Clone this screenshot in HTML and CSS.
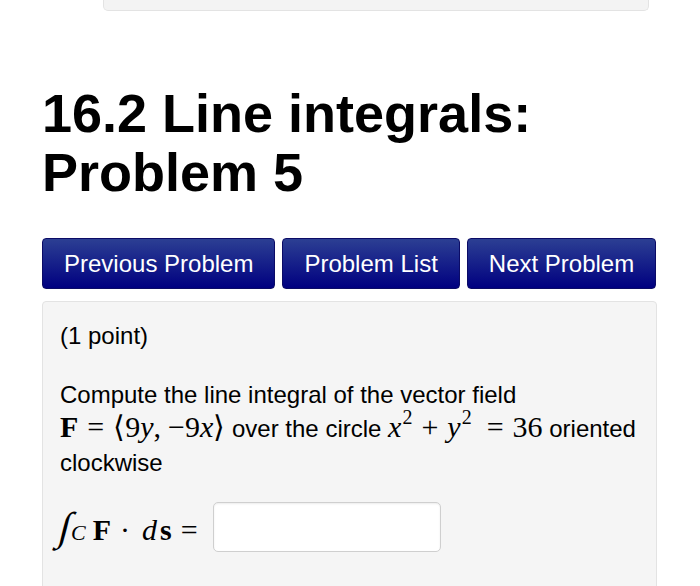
FILE: index.html
```html
<!DOCTYPE html>
<html lang="en">
<head>
    <meta charset="UTF-8">
    <meta name="viewport" content="width=device-width, initial-scale=1.0">
    <title>16.2 Line integrals: Problem 5</title>
    <link rel="stylesheet" href="styles.css">
</head>
<body>

<div id="page">
    <div class="top-well"></div>

    <h1 class="problem-title">16.2 Line integrals:<br>Problem 5</h1>

    <div class="nav-buttons">
        <button class="nav-btn">Previous Problem</button>
        <button class="nav-btn">Problem List</button>
        <button class="nav-btn">Next Problem</button>
    </div>

    <div class="problem-well">
        <div class="points">(1 point)</div>

        <p class="statement">
            Compute the line integral of the vector field<br>
            <span class="math"><b>F</b><span class="rel">=</span>⟨9<i>y</i>,<span class="thin"></span>−9<i>x</i>⟩</span>
            over the circle
            <span class="math"><i>x</i><sup>2</sup><span class="bin">+</span><i>y</i><sup>2</sup><span class="rel wide">=</span>36</span>
            oriented<br>
            clockwise
        </p>

        <div class="answer-row">
            <span class="math integral-expr"><span class="int">∫</span><sub><i>C</i></sub><b>F</b><span class="dot">·</span><i>d</i><b class="vec-s">s</b><span class="rel">=</span></span>
            <input class="answer-input" type="text">
        </div>
    </div>
</div>

</body>
</html>
```

FILE: styles.css
```css
body {
    margin: 0;
    background-color: #fff;
    font-family: 'Liberation Sans', Arial, sans-serif;
    color: #000;
}

#page {
    padding: 0 43px 0 42px;
}

.top-well {
    margin-left: 61px;
    width: 544px;
    height: 10px;
    background-color: #f3f3f3;
    border: 1px solid #e3e3e3;
    border-top: none;
    border-radius: 0 0 5px 5px;
}

.problem-title {
    margin: 73px 0 0 0;
    font-size: 54px;
    line-height: 59px;
    font-weight: bold;
}

.nav-buttons {
    display: flex;
    gap: 7px;
    margin-top: 36px;
}

.nav-btn {
    height: 51px;
    padding: 0 21px;
    white-space: nowrap;
    font-family: 'Liberation Sans', Arial, sans-serif;
    font-size: 24px;
    color: #fff;
    background: linear-gradient(to bottom, #2c3f93, #000080);
    border: 1px solid #0b0b66;
    border-radius: 4px;
    cursor: pointer;
}

.problem-well {
    margin-top: 12px;
    padding: 17px 17px 40px 17px;
    min-height: 300px;
    background-color: #f5f5f5;
    border: 1px solid #e3e3e3;
    border-radius: 4px;
    font-size: 24px;
    line-height: 34px;
}

.points {
    margin-bottom: 25px;
}

.statement {
    margin: 0;
}

.math {
    font-family: 'Liberation Serif', 'Times New Roman', serif;
    font-size: 30px;
    line-height: 1;
    white-space: nowrap;
}

.math i {
    font-style: italic;
}

.math sup {
    font-size: 20px;
    line-height: 0;
    vertical-align: 13px;
    margin-left: 1px;
}

.rel {
    margin: 0 9px;
}

.rel.wide {
    margin-left: 15px;
}

.bin {
    margin: 0 9px;
}

.thin {
    display: inline-block;
    width: 7px;
}

.answer-row {
    display: flex;
    align-items: center;
    margin-top: 22px;
}

.integral-expr {
    display: flex;
    align-items: baseline;
    width: 153px;
}

.int {
    font-size: 40px;
    display: inline-block;
    transform: skewX(-14deg);
}

.integral-expr sub {
    font-size: 22px;
    line-height: 0;
    vertical-align: -11px;
    margin-right: 7px;
}

.dot {
    margin: 0 12px 0 9px;
}

.vec-s {
    margin-left: 3px;
}

.answer-input {
    width: 228px;
    height: 50px;
    box-sizing: border-box;
    background-color: #fff;
    border: 1px solid #cfcfcf;
    border-radius: 5px;
    box-shadow: inset 0 1px 2px rgba(0, 0, 0, 0.08);
}
```
